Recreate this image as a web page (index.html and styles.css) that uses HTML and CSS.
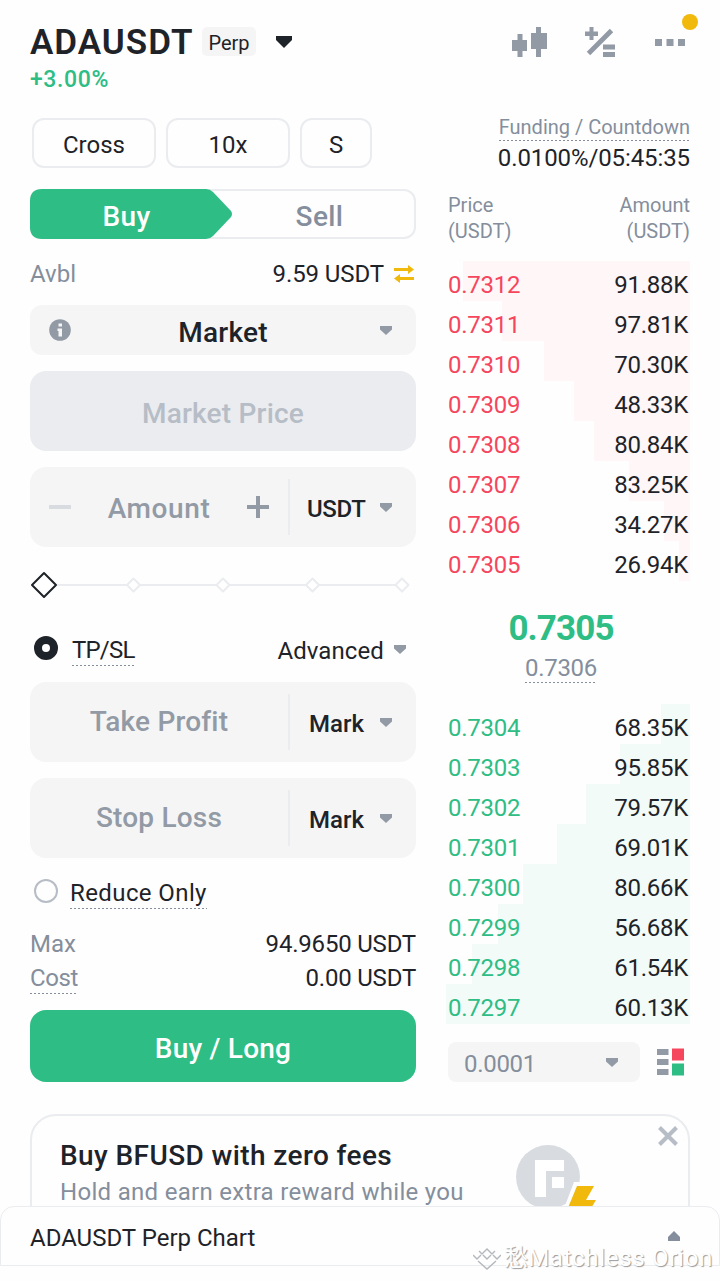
FILE: index.html
```
<!DOCTYPE html>
<html lang="en">
  <head>
    <meta charset="utf-8" />
    <title>ADAUSDT Perp</title>
    <meta name="viewport" content="width=device-width, initial-scale=1" />
    <link rel="stylesheet" href="styles.css">
  </head>
  <body>
    <header class="header">
      <div>
        <div class="pair">
          <h1>ADAUSDT</h1>
          <span class="tag">Perp</span>
          <svg class="pair-caret" width="16" height="12" viewBox="0 0 16 12"><path d="M0 0h16v4L8 12 0 4z" fill="#1e2329"/></svg>
        </div>
        <div class="change">+3.00%</div>
      </div>
      <div class="header-icons">
        <svg width="36" height="30" viewBox="0 0 36 30" fill="#929aa5"><path d="M5.500 7h5v6H15v11h-4.500v6h-5v-6H0V13h5.500zM24 0h5v6h6v16h-6v8h-5v-8h-5V6h5z"/></svg>
        <svg width="30" height="30" viewBox="0 0 30 30"><path d="M4.500 0h4v4.500h4.500v4.500h-4.500v4h-4V9H0V4.500h4.500zM18 17.500h12v5H18zM18 25h12v5H18z" fill="#929aa5"/><path d="M3.500 26.500L26.500 3.500" stroke="#929aa5" stroke-width="4.800"/></svg>
        <div class="more">
          <svg width="30" height="7" viewBox="0 0 30 7"><path d="M0 0h7v7H0zM11.500 0h7v7h-7zM23 0h7v7h-7z" fill="#929aa5"/></svg>
          <i class="more-dot"></i>
        </div>
      </div>
    </header>

    <main class="trade">
      <section class="form">
        <div class="modes">
          <button class="mode">Cross</button>
          <button class="mode">10x</button>
          <button class="mode mode-small">S</button>
        </div>

        <div class="side">
          <svg class="side-shape" width="202" height="50" viewBox="0 0 202 50"><path d="M12 0h164q4 0 7 3l18 19q2 3 0 6l-18 19q-3 3-7 3H12Q0 50 0 38V12Q0 0 12 0z" fill="#2ebd85"/></svg>
          <span class="side-buy">Buy</span>
          <span class="side-sell">Sell</span>
        </div>

        <div class="line avbl">
          <span class="muted">Avbl</span>
          <span class="avbl-value">9.59 USDT
            <svg width="20" height="18" viewBox="0 0 20 18" fill="#f0b90b"><path d="M0 3h14V0l6 4.500L14 9V6H0zM20 12H6V9l-6 4.500L6 18v-3h14z"/></svg>
          </span>
        </div>

        <div class="field order-type">
          <svg width="22" height="22" viewBox="0 0 22 22"><circle cx="11" cy="11" r="10.800" fill="#929aa5"/><path d="M9.500 4.500h3.500v3h-3.500zM8.500 9.500H13V17.500H9.500V12h-1z" fill="#f5f5f5"/></svg>
          <span>Market</span>
          <svg class="caret" viewBox="0 0 12 9"><path d="M0 0h12v3.500L6 9 0 3.500z"/></svg>
        </div>

        <div class="field field-disabled">Market Price</div>

        <div class="field field-split amount">
          <div class="field-main">
            <svg width="22" height="22" viewBox="0 0 22 22"><path d="M0 9h22v4H0z" fill="#d8dce1"/></svg>
            <span>Amount</span>
            <svg width="22" height="22" viewBox="0 0 22 22"><path d="M9 0h4v9h9v4h-9v9H9v-9H0V9h9z" fill="#929aa5"/></svg>
          </div>
          <div class="field-unit">
            <span class="unit-usdt">USDT</span>
            <svg class="caret" viewBox="0 0 12 9"><path d="M0 0h12v3.500L6 9 0 3.500z"/></svg>
          </div>
        </div>

        <svg class="slider" width="386" height="28" viewBox="0 0 386 28">
          <path d="M26 14h346" stroke="#eaecef" stroke-width="2"/>
          <g fill="#fff" stroke="#eaecef" stroke-width="2" stroke-linejoin="round">
            <path d="M103.500 7.500l6.500 6.500-6.500 6.500L97 14z"/>
            <path d="M193 7.500l6.500 6.500-6.500 6.500-6.500-6.500z"/>
            <path d="M282.500 7.500l6.500 6.500-6.500 6.500-6.500-6.500z"/>
            <path d="M372 7.500l6.500 6.500-6.500 6.500-6.500-6.500z"/>
          </g>
          <path d="M14 2l12 12-12 12L2 14z" fill="#fff" stroke="#1e2329" stroke-width="2" stroke-linejoin="round"/>
        </svg>

        <div class="option tpsl">
          <i class="radio radio-on"></i>
          <span class="dashed">TP/SL</span>
          <span class="advanced">Advanced</span>
          <svg class="caret" viewBox="0 0 12 9"><path d="M0 0h12v3.500L6 9 0 3.500z"/></svg>
        </div>

        <div class="field field-split">
          <div class="field-main field-center">Take Profit</div>
          <div class="field-unit">
            <span>Mark</span>
            <svg class="caret" viewBox="0 0 12 9"><path d="M0 0h12v3.500L6 9 0 3.500z"/></svg>
          </div>
        </div>
        <div class="field field-split stop-loss">
          <div class="field-main field-center">Stop Loss</div>
          <div class="field-unit">
            <span>Mark</span>
            <svg class="caret" viewBox="0 0 12 9"><path d="M0 0h12v3.500L6 9 0 3.500z"/></svg>
          </div>
        </div>

        <div class="option reduce">
          <i class="radio"></i>
          <span class="dashed">Reduce Only</span>
        </div>

        <div class="line">
          <span class="muted">Max</span>
          <span class="value">94.9650 USDT</span>
        </div>
        <div class="line">
          <span class="muted dashed cost">Cost</span>
          <span class="value">0.00 USDT</span>
        </div>

        <button class="submit">Buy / Long</button>
      </section>

      <section class="book">
        <div class="funding">
          <span class="funding-label">Funding / Countdown</span>
          <span class="funding-value">0.0100%/05:45:35</span>
        </div>
        <div class="book-head">
          <span>Price<br>(USDT)</span>
          <span>Amount<br>(USDT)</span>
        </div>
        <div class="rows asks">
          <div class="row" style="--depth: 227px"><span>0.7312</span><span>91.88K</span></div>
          <div class="row" style="--depth: 188px"><span>0.7311</span><span>97.81K</span></div>
          <div class="row" style="--depth: 146px"><span>0.7310</span><span>70.30K</span></div>
          <div class="row" style="--depth: 116px"><span>0.7309</span><span>48.33K</span></div>
          <div class="row" style="--depth: 96px"><span>0.7308</span><span>80.84K</span></div>
          <div class="row" style="--depth: 61px"><span>0.7307</span><span>83.25K</span></div>
          <div class="row" style="--depth: 26px"><span>0.7306</span><span>34.27K</span></div>
          <div class="row" style="--depth: 11px"><span>0.7305</span><span>26.94K</span></div>
        </div>
        <div class="last">
          <strong>0.7305</strong>
          <span>0.7306</span>
        </div>
        <div class="rows bids">
          <div class="row" style="--depth: 29px"><span>0.7304</span><span>68.35K</span></div>
          <div class="row" style="--depth: 70px"><span>0.7303</span><span>95.85K</span></div>
          <div class="row" style="--depth: 104px"><span>0.7302</span><span>79.57K</span></div>
          <div class="row" style="--depth: 133px"><span>0.7301</span><span>69.01K</span></div>
          <div class="row" style="--depth: 167px"><span>0.7300</span><span>80.66K</span></div>
          <div class="row" style="--depth: 192px"><span>0.7299</span><span>56.68K</span></div>
          <div class="row" style="--depth: 218px"><span>0.7298</span><span>61.54K</span></div>
          <div class="row" style="--depth: 244px"><span>0.7297</span><span>60.13K</span></div>
        </div>
        <div class="book-foot">
          <div class="step">
            <span>0.0001</span>
            <svg class="caret" viewBox="0 0 12 9"><path d="M0 0h12v3.500L6 9 0 3.500z"/></svg>
          </div>
          <svg width="28" height="28" viewBox="0 0 28 28"><path d="M1 1h11.500v6H1zM1 11h11.500v6H1zM1 21h11.500v6H1z" fill="#929aa5"/><path d="M16 .500h12v12H16z" fill="#f6465d"/><path d="M16 15.500h12v12H16z" fill="#2ebd85"/></svg>
        </div>
      </section>
    </main>

    <section class="promo">
      <div class="promo-text">
        <h2>Buy BFUSD with zero fees</h2>
        <p>Hold and earn extra reward while you</p>
      </div>
      <svg class="promo-logo" width="84" height="66" viewBox="0 0 84 66">
        <circle cx="32" cy="32" r="32" fill="#d8dce1"/>
        <path d="M19 15h29v11H30v26H19zM36 32h12v11H36z" fill="#fff"/>
        <path d="M58 37h24v29H47z" fill="#fefefe"/>
        <path d="M61 41h17l-8 14h10l-9 15H49z" fill="#f0b90b"/>
      </svg>
      <svg class="promo-close" width="20" height="20" viewBox="0 0 20 20"><path d="M1.500 1.500l17 17M18.500 1.500l-17 17" stroke="#b7bdc6" stroke-width="4"/></svg>
    </section>

    <footer class="chart-bar">
      <span>ADAUSDT Perp Chart</span>
      <svg width="12" height="10" viewBox="0 0 12 10"><path d="M6 0l6 6v4H0V6z" fill="#848e9c"/></svg>
    </footer>

    <div class="watermark">
      <svg width="28" height="24" viewBox="0 0 28 24" fill="none" stroke="#b4b8bd" stroke-width="1.400"><path d="M6 5l3 3 5-5 5 5 3-3M0 9l4 4 4-4M10 9l4 4 4-4M20 9l4 4 4-4M5 15l9 8 9-8"/></svg>
      <span>愁</span><span class="watermark-name">Matchless Orion</span>
    </div>
  </body>
</html>
```
FILE: styles.css
```
html {
  font-family: Roboto, "Noto Sans CJK SC", sans-serif;
  font-size: 24px;
  line-height: 32px;
  color: #1e2329;
}

body {
  box-sizing: border-box;
  position: relative;
  height: 1281px;
  margin: 0;
  padding: 0 30px;
  overflow: hidden;
  background-color: #fefefe;
}

h1,
h2,
p {
  margin: 0;
}

button {
  padding: 0;
  border: 0;
  font: inherit;
  color: inherit;
}

svg {
  display: block;
  flex: none;
}

/* header */

.header {
  display: flex;
  justify-content: space-between;
  height: 118px;
}

.pair {
  display: flex;
  align-items: center;
  padding-top: 24px;
  height: 37px;
}

.pair h1 {
  width: 172px;
  padding-top: 1px;
  font-size: 35px;
  font-weight: 600;
  letter-spacing: 1px;
}

.tag {
  width: 54px;
  height: 29px;
  margin-top: -3px;
  border-radius: 5px;
  background-color: #f5f5f5;
  font-size: 20px;
  line-height: 32px;
  text-align: center;
}

.pair-caret {
  margin: -2px 0 0 20px;
}

.change {
  margin-top: 3px;
  font-size: 23px;
  font-weight: 500;
  letter-spacing: 0.6px;
  color: #2ebd85;
}

.header-icons {
  display: flex;
  align-items: flex-start;
  padding: 27px 5px 0 0;
}

.header-icons > svg:first-child {
  margin-right: 37px;
}

.more {
  position: relative;
  margin: 12px 0 0 40px;
}

.more-dot {
  position: absolute;
  top: -25px;
  right: -13px;
  width: 16px;
  height: 16px;
  border-radius: 50%;
  background-color: #f0b90b;
}

/* layout */

.trade {
  display: flex;
  justify-content: space-between;
}

.form {
  width: 386px;
}

.book {
  width: 242px;
}

.muted {
  color: #848e9c;
}

.dashed {
  background: repeating-linear-gradient(90deg, #848e9c 0 2px, transparent 2px 4px) bottom / 100% 1px no-repeat;
}

.caret {
  width: 12px;
  height: 9px;
  fill: #929aa5;
}

/* order form */

.modes {
  display: flex;
  gap: 10px;
  padding-left: 2px;
}

.mode {
  box-sizing: border-box;
  width: 124px;
  height: 50px;
  padding-top: 3px;
  border: 2px solid #eaecef;
  border-radius: 12px;
  background: none;
}

.mode-small {
  width: 72px;
}

.side {
  box-sizing: border-box;
  position: relative;
  display: flex;
  height: 50px;
  margin-top: 21px;
  border: 2px solid #eaecef;
  border-radius: 12px;
  font-size: 28px;
  font-weight: 500;
  line-height: 52px;
  letter-spacing: 0.4px;
  text-align: center;
}

.side-shape {
  position: absolute;
  top: -2px;
  left: -2px;
}

.side-buy {
  position: relative;
  width: 189px;
  color: #fff;
}

.side-sell {
  flex: 1;
  padding-left: 4px;
  color: #848e9c;
}

.line {
  display: flex;
  justify-content: space-between;
  height: 34px;
  line-height: 34px;
}

.value {
  letter-spacing: -0.2px;
}

.cost {
  height: 33px;
  letter-spacing: -0.4px;
}

.avbl {
  margin: 18px 0 14px;
}

.avbl-value {
  display: flex;
  align-items: center;
  gap: 10px;
  padding-right: 2px;
  letter-spacing: -0.1px;
}

.field {
  display: flex;
  align-items: center;
  height: 80px;
  border-radius: 16px;
  background-color: #f5f5f5;
  font-size: 28px;
  font-weight: 500;
  letter-spacing: 0.2px;
  color: #929aa5;
}

.order-type {
  justify-content: space-between;
  height: 50px;
  padding: 0 24px 0 19px;
  border-radius: 12px;
  color: #1e2329;
}

.order-type span {
  padding: 5px 5px 0 0;
}

.field-disabled {
  justify-content: center;
  margin: 16px 0;
  padding-top: 5px;
  height: 75px;
  background-color: #eaecef;
  color: #b7bdc6;
}

.field-main {
  display: flex;
  flex: 1;
  align-items: center;
  justify-content: space-between;
  padding: 0 19px;
}

.field-main span {
  padding-top: 3px;
  letter-spacing: 0.6px;
}

.field-center {
  justify-content: center;
}

.field-unit {
  box-sizing: border-box;
  display: flex;
  align-items: center;
  justify-content: space-between;
  width: 128px;
  height: 56px;
  padding: 0 24px 0 19px;
  border-left: 2px solid #eaecef;
  font-size: 24px;
  color: #1e2329;
}

.field-unit span {
  padding-top: 3px;
  letter-spacing: 0;
}

.field-unit .unit-usdt {
  margin-left: -2px;
  letter-spacing: -0.4px;
}

.slider {
  margin: 24px 0 33px;
}

.option {
  display: flex;
  align-items: center;
  height: 34px;
  padding: 0 10px 0 4px;
}

.option .dashed {
  height: 33px;
  line-height: 34px;
}

.tpsl {
  margin-bottom: 16px;
}

.tpsl .dashed {
  letter-spacing: -0.8px;
}

.radio {
  box-sizing: border-box;
  width: 24px;
  height: 24px;
  margin: -2px 12px 0 0;
  border: 2px solid #b7bdc6;
  border-radius: 50%;
}

.radio-on {
  margin-right: 14px;
  border: 8px solid #1e2329;
}

.advanced {
  margin: 3px 10px 0 auto;
  letter-spacing: 0.1px;
}

.stop-loss {
  margin-top: 16px;
}

.reduce {
  margin: 17px 0 18px;
}

.reduce .dashed {
  letter-spacing: 0.4px;
}

.submit {
  display: block;
  width: 100%;
  height: 72px;
  margin-top: 15px;
  padding-top: 5px;
  border-radius: 16px;
  background-color: #2ebd85;
  font-size: 28px;
  font-weight: 500;
  letter-spacing: 0.2px;
  color: #fff;
}

/* order book */

.funding {
  display: flex;
  flex-direction: column;
  align-items: flex-end;
  margin-left: -10px;
}

.funding-label {
  height: 23px;
  background: repeating-linear-gradient(90deg, #848e9c 0 2px, transparent 2px 4px) bottom / 100% 1px no-repeat;
  font-size: 20px;
  line-height: 19px;
  color: #848e9c;
}

.funding-value {
  line-height: 34px;
  letter-spacing: -0.1px;
}

.book-head {
  display: flex;
  justify-content: space-between;
  margin: 17px 0 17px;
  font-size: 20px;
  line-height: 26px;
  color: #848e9c;
}

.book-head span:last-child {
  text-align: right;
}

.row {
  display: flex;
  justify-content: space-between;
  height: 40px;
  margin-left: -2px;
  padding: 0 2px;
  line-height: 48px;
  letter-spacing: -0.25px;
  background: linear-gradient(var(--bar), var(--bar)) right / var(--depth) 100% no-repeat;
}

.asks {
  --bar: #fff6f7;
}

.asks span:first-child {
  color: #f6465d;
}

.bids {
  --bar: #f2fbf8;
}

.bids span:first-child {
  color: #2ebd85;
}

.last {
  display: flex;
  flex-direction: column;
  align-items: center;
  height: 123px;
  padding-right: 16px;
  box-sizing: border-box;
}

.last strong {
  margin-top: 32px;
  font-size: 35px;
  letter-spacing: -0.9px;
  color: #2ebd85;
}

.last span {
  height: 38px;
  background: repeating-linear-gradient(90deg, #848e9c 0 2px, transparent 2px 4px) bottom / 100% 1px no-repeat;
  line-height: 46px;
  letter-spacing: -0.3px;
  color: #848e9c;
}

.book-foot {
  display: flex;
  align-items: center;
  justify-content: space-between;
  margin-top: 18px;
  padding-right: 6px;
}

.step {
  box-sizing: border-box;
  display: flex;
  align-items: center;
  justify-content: space-between;
  width: 192px;
  height: 40px;
  padding: 0 22px 0 16px;
  border-radius: 8px;
  background-color: #f5f5f5;
  letter-spacing: -0.3px;
  color: #848e9c;
}

.step span {
  padding-top: 4px;
}

/* promo card and chart bar */

.promo {
  box-sizing: border-box;
  position: relative;
  display: flex;
  justify-content: space-between;
  height: 130px;
  margin-top: 32px;
  padding: 22px 88px 0 28px;
  border: 2px solid #eaecef;
  border-radius: 26px;
}

.promo h2 {
  font-size: 28px;
  font-weight: 500;
  line-height: 36px;
  letter-spacing: 0.4px;
}

.promo p {
  line-height: 37px;
  letter-spacing: 0.3px;
  color: #848e9c;
  white-space: nowrap;
}

.promo-logo {
  margin-top: 7px;
}

.promo-close {
  position: absolute;
  top: 10px;
  right: 10px;
}

.chart-bar {
  box-sizing: border-box;
  position: absolute;
  top: 1206px;
  left: 0;
  display: flex;
  align-items: center;
  justify-content: space-between;
  width: 720px;
  height: 60px;
  padding: 3px 39px 0 29px;
  border: 1px solid #eaecef;
  border-radius: 14px 14px 0 0;
  background-color: #fefefe;
  box-shadow: 0 20px 0 #fefefe;
}

.chart-bar svg {
  margin-top: -3px;
}

.watermark {
  position: absolute;
  top: 1242px;
  right: 7px;
  display: flex;
  align-items: center;
  color: #fff;
  text-shadow: 1px 1px 1px #999;
  white-space: nowrap;
}

.watermark svg {
  margin-right: 3px;
}

.watermark-name {
  letter-spacing: 0.7px;
}
```
